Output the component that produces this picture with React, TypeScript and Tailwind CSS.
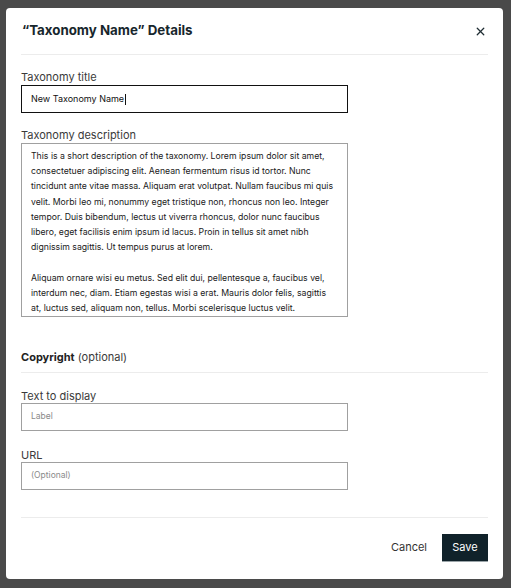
import { X } from "lucide-react";

const font = { fontFamily: "Inter, 'Liberation Sans', sans-serif" };

const description = `This is a short description of the taxonomy. Lorem ipsum dolor sit amet, consectetuer adipiscing elit. Aenean fermentum risus id tortor. Nunc tincidunt ante vitae massa. Aliquam erat volutpat. Nullam faucibus mi quis velit. Morbi leo mi, nonummy eget tristique non, rhoncus non leo. Integer tempor. Duis bibendum, lectus ut viverra rhoncus, dolor nunc faucibus libero, eget facilisis enim ipsum id lacus. Proin in tellus sit amet nibh dignissim sagittis. Ut tempus purus at lorem.

Aliquam ornare wisi eu metus. Sed elit dui, pellentesque a, faucibus vel, interdum nec, diam. Etiam egestas wisi a erat. Mauris dolor felis, sagittis at, luctus sed, aliquam non, tellus. Morbi scelerisque luctus velit.`;

function FieldLabel({ children }: { children: React.ReactNode }) {
  return <div className="text-[11px] leading-[14px] text-[#3a3a3a]">{children}</div>;
}

export default function App() {
  return (
    <div
      className="h-[588px] w-[511px] bg-[#4a4a4a] pl-[6px] pt-[8px]"
      style={font}
    >
      <div className="flex h-[571px] w-[497px] flex-col rounded-[4px] bg-white px-[15px]">
        {/* header */}
        <div className="flex h-[47px] items-center justify-between border-b border-[#ececec]">
          <h1 className="pl-[1px] text-[13.3px] font-bold text-[#17262c]">
            “Taxonomy Name” Details
          </h1>
          <button type="button" className="mr-[1px] text-[#1f2d33]">
            <X className="h-[13px] w-[13px]" strokeWidth={2.3} />
          </button>
        </div>

        <div className="mt-[15px]">
          <FieldLabel>Taxonomy title</FieldLabel>
          <div className="mt-[1px] flex h-[28px] w-[327px] items-center border-[1.5px] border-[#111] px-[9px] text-[9px] text-[#111]">
            New Taxonomy Name
            <span className="ml-[0.5px] inline-block h-[11px] w-px bg-[#111]" />
          </div>
        </div>

        <div className="mt-[15px]">
          <FieldLabel>Taxonomy description</FieldLabel>
          <div className="mt-[1px] h-[174px] w-[327px] whitespace-pre-line border border-[#a0a0a0] px-[9px] pt-[5px] text-[8.7px] leading-[15.2px] text-[#1a1a1a]">
            {description}
          </div>
        </div>

        <div className="mt-[32px] border-b border-[#ececec] pb-[6px] text-[11px] text-[#3a3a3a]">
          <span className="font-bold text-[#222]">Copyright</span> (optional)
        </div>

        <div className="mt-[16px]">
          <FieldLabel>Text to display</FieldLabel>
          <div className="flex h-[28px] w-[327px] items-center border border-[#a0a0a0] px-[9px] text-[8.5px] text-[#8a8a8a]">
            Label
          </div>
        </div>

        <div className="mt-[17px]">
          <FieldLabel>URL</FieldLabel>
          <div className="flex h-[28px] w-[327px] items-center border border-[#a0a0a0] px-[9px] text-[8.5px] text-[#8a8a8a]">
            (Optional)
          </div>
        </div>

        <div className="mt-[27px] border-b border-[#ececec]" />

        <div className="mt-[16px] flex items-center justify-end gap-[15px]">
          <button type="button" className="text-[11px] text-[#333]">
            Cancel
          </button>
          <button
            type="button"
            className="h-[28px] w-[46px] border-b border-[#9aa4a8] bg-[#10222a] text-[11px] text-white"
          >
            Save
          </button>
        </div>
      </div>
    </div>
  );
}
